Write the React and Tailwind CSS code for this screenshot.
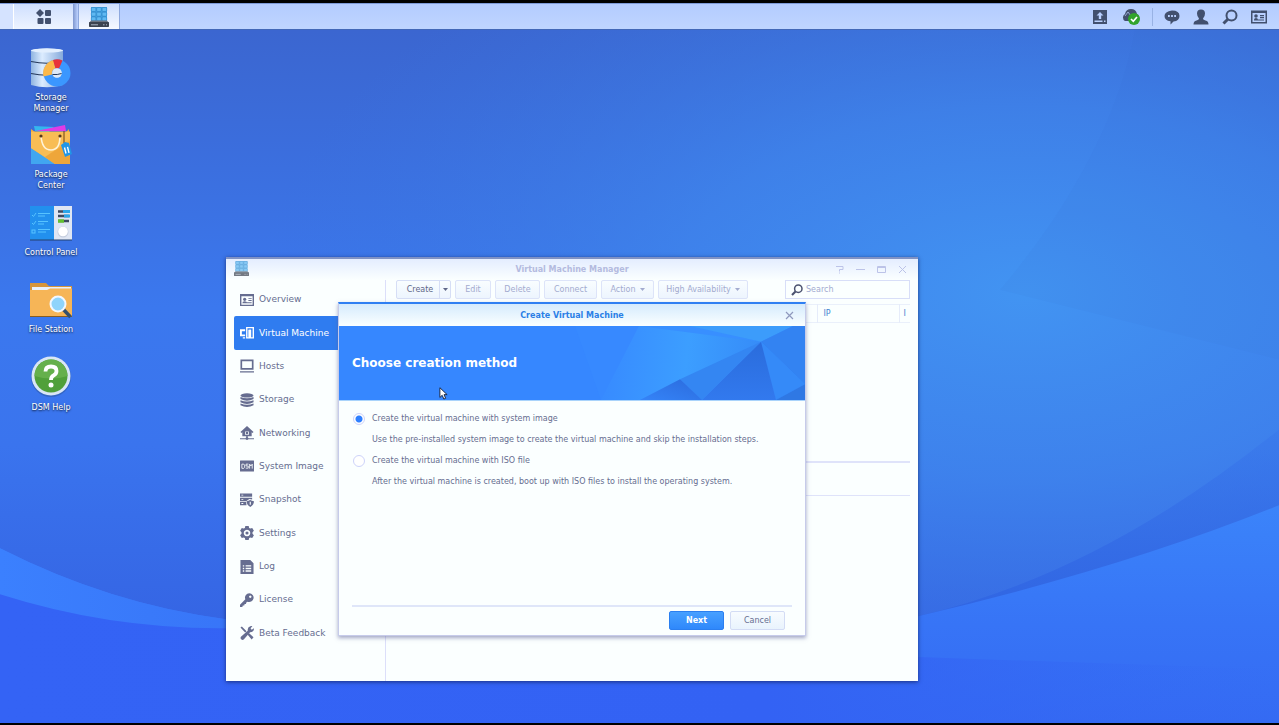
import React, { useState } from 'react'

const ServerIcon = ({ className }) => (
  <svg viewBox="0 0 20 20" className={className}>
    <rect x="2" y="0" width="16" height="15" fill="#3f9fe0" />
    <g fill="#5fb9f2" stroke="#2f86c8" strokeWidth="0.6">
      <rect x="2.3" y="0.5" width="4.6" height="4" rx="1" />
      <rect x="7.7" y="0.5" width="4.6" height="4" rx="1" />
      <rect x="13.1" y="0.5" width="4.6" height="4" rx="1" />
      <rect x="2.3" y="5.2" width="4.6" height="4" rx="1" />
      <rect x="7.7" y="5.2" width="4.6" height="4" rx="1" />
      <rect x="13.1" y="5.2" width="4.6" height="4" rx="1" />
      <rect x="2.3" y="9.9" width="4.6" height="4" rx="1" />
      <rect x="7.7" y="9.9" width="4.6" height="4" rx="1" />
      <rect x="13.1" y="9.9" width="4.6" height="4" rx="1" />
    </g>
    <path d="M2 13.5h16l2 2.5H0z" fill="#6d7581" />
    <rect x="0" y="15" width="20" height="5" rx="0.8" fill="#3c434f" />
    <path d="M2 17.8h7M14 17.8h1.5M17 17.8h1" stroke="#aab4c2" strokeWidth="1" />
  </svg>
)

const StorageManagerIcon = () => (
  <svg viewBox="0 0 44 44" className="w-11 h-11">
    <defs>
      <linearGradient id="drum" x1="0" x2="1" y1="0" y2="0">
        <stop offset="0" stopColor="#8fb4e0" />
        <stop offset="0.35" stopColor="#dcecff" />
        <stop offset="1" stopColor="#86aadb" />
      </linearGradient>
    </defs>
    <path d="M2 4.5Q18 0 34 4.5V39q-16 4.500-32 0z" fill="url(#drum)" />
    <ellipse cx="18" cy="4.500" rx="16" ry="2" fill="#e3effe" />
    <path d="M2 15.500q16 3.500 32 0M2 27.500q16 3.500 32 0" stroke="#263a5c" strokeWidth="1.200" fill="none" />
    <circle cx="28" cy="27" r="9" fill="none" stroke="#3b97ff" strokeWidth="9" />
    <path d="M14.500 30.500A13.500 13.500 0 0 1 24.500 14l2 8.500a5 5 0 0 0-3.500 6z" fill="#fbb84a" />
    <path d="M24 14a13.500 13.500 0 0 1 9.500 0.500l-3.500 8a5 5 0 0 0-3.500 0z" fill="#e8323a" />
    <circle cx="28" cy="27" r="4.800" fill="#dbe9fa" />
    <path d="M23.500 28.500q5 0.500 9-1" stroke="#263a5c" strokeWidth="1" fill="none" />
  </svg>
)

const PackageIcon = () => (
  <svg viewBox="0 0 44 44" className="w-11 h-11">
    <path d="M6 8l-1-5 20 1-6 6z" fill="#35b6ee" />
    <path d="M7 8L36 2l1 6z" fill="#e03be6" />
    <path d="M2 6l4 3h31l3-3v35H2z" fill="#f0aa3e" />
    <path d="M2 8.500h39V41H2z" fill="#f5b54a" />
    <path d="M2 25l24 16H2z" fill="#41a6f0" />
    <path d="M2 25l14 9 25-18v-7H2z" fill="#f8bd55" />
    <path d="M41 18v23H26L16 34z" fill="#eea63a" />
    <path d="M12 13q1 14 10 14t9-14" fill="none" stroke="#fff3d6" strokeWidth="1.600" />
    <circle cx="12" cy="13" r="1.600" fill="#57391c" />
    <circle cx="31" cy="13" r="1.600" fill="#57391c" />
    <path d="M35 8v12" stroke="#6b4318" strokeWidth="1" />
    <path d="M32 22l4-3 4 1 3 11-7 3z" fill="#2196e6" />
    <path d="M35.500 24.500l1.500 6M38.500 23.800l1.500 6" stroke="#fff" strokeWidth="1.400" />
  </svg>
)

const ControlPanelIcon = () => (
  <svg viewBox="0 0 44 44" className="w-11 h-11">
    <rect x="1" y="5" width="24" height="34" fill="#2290ee" />
    <rect x="25" y="5" width="18" height="34" fill="#dfe6f3" />
    <path d="M1 39h42" stroke="#22406f" strokeWidth="1.200" />
    <g stroke="#57c3ff" strokeWidth="1" fill="none">
      <path d="M3 14l1.500 1.500L7 12M3 22l1.500 1.500L7 20" />
      <rect x="3" y="29" width="3" height="3" />
      <path d="M9 12.500h12M9 15h7M9 20.500h10M9 23h6M9 28.500h12M9 31h8" />
    </g>
    <path d="M29 10.500h11M29 15h11M29 20h11" stroke="#3d4a60" strokeWidth="2.400" />
    <rect x="34" y="9" width="7" height="3" fill="#2ba6ea" />
    <rect x="35" y="13.500" width="6" height="3" fill="#2ba6ea" />
    <rect x="29" y="18.300" width="6" height="3.400" fill="#62c130" />
    <circle cx="34" cy="31" r="5.500" fill="#c5cede" />
    <circle cx="34" cy="30.500" r="4.800" fill="#fff" />
  </svg>
)

const FileStationIcon = () => (
  <svg viewBox="0 0 44 44" className="w-11 h-11">
    <path d="M1 5h16l3 3h23v30H1z" fill="#d6953a" />
    <path d="M3 9h39v5H3z" fill="#e9f1fb" />
    <path d="M1 12h17l3-1.500h22V38H1z" fill="#f6b557" />
    <path d="M1 38.500h42" stroke="#8a5d20" strokeWidth="1" />
    <path d="M34 31l7.500 8" stroke="#34506e" strokeWidth="3.400" />
    <circle cx="29" cy="26" r="7.500" fill="#8fd4fb" stroke="#f2f8ff" strokeWidth="2" />
  </svg>
)

const HelpIcon = () => (
  <svg viewBox="0 2 44 44" className="w-11 h-11">
    <circle cx="22" cy="23" r="20" fill="#2b4f86" opacity="0.4" />
    <circle cx="22" cy="22" r="19.500" fill="#d9e6f6" />
    <circle cx="22" cy="22" r="16.500" fill="#50a03a" />
    <path d="M5.500 22a16.500 16.500 0 0 1 33 0q-16 5-33 0z" fill="#65b04c" />
    <path d="M16.500 17.500q0-5 5.500-5t5.500 4.500q0 3-3 4.500-2.500 1.300-2.500 4.500" fill="none" stroke="#fff" strokeWidth="3.800" />
    <circle cx="22" cy="31" r="2.500" fill="#fff" />
  </svg>
)

const shortcuts = [
  { label: ['Storage', 'Manager'], icon: <StorageManagerIcon /> },
  { label: ['Package', 'Center'], icon: <PackageIcon /> },
  { label: ['Control Panel'], icon: <ControlPanelIcon /> },
  { label: ['File Station'], icon: <FileStationIcon /> },
  { label: ['DSM Help'], icon: <HelpIcon /> },
]

const menu = [
  {
    name: 'Overview',
    icon: (
      <>
        <path d="M0 1h15v13H0zM1.500 3.500v9h12v-9z" fillRule="evenodd" />
        <circle cx="5" cy="6.800" r="1.700" />
        <path d="M2.500 11q0-2.200 2.500-2.200T7.500 11zM9 5.500h3.500v1H9zM9 7.500h3.500v1H9zM3 10h9.500v1H3z" />
      </>
    ),
  },
  {
    name: 'Virtual Machine',
    icon: (
      <>
        <path d="M6.500 1H15v12.500H6.500zM8 2.500v9.500h1.500V4H12v8h1.500V2.500z" fillRule="evenodd" />
        <path d="M9 4h2.800v8.500H9z" />
        <path d="M5.500 3.500H0v7.500h5.500V9H2V5.500h3.500zM3 12h2.500v1.500H3z" />
      </>
    ),
  },
  {
    name: 'Hosts',
    icon: <path d="M0.500 0.500h14v11h-14zM2.300 2.300v7.400h10.400V2.300zM0 13h15v1.500H0z" fillRule="evenodd" />,
  },
  {
    name: 'Storage',
    icon: (
      <>
        <ellipse cx="7.500" cy="2.600" rx="7" ry="2.300" />
        <path d="M0.500 4.200q7 3 14 0v2.300q-7 3.400-14 0zM0.500 7.700q7 3 14 0V10q-7 3.400-14 0zM0.500 11.200q7 3 14 0v2q-7 3.400-14 0z" />
      </>
    ),
  },
  {
    name: 'Networking',
    icon: (
      <>
        <path d="M7.500 0L14.500 6.500 13.500 7.500 12.500 6.800V11H8.300V13H15v1.300H0V13H6.700V11H2.500V6.800L1.500 7.500 0.500 6.500zM5.500 6v3.500h4V6z" fillRule="evenodd" />
        <circle cx="7.500" cy="7.500" r="1.300" />
        <circle cx="7.500" cy="13.500" r="1.500" />
      </>
    ),
  },
  {
    name: 'System Image',
    icon: (
      <>
        <rect x="0" y="1.500" width="15" height="12" rx="0.500" />
        <path d="M2 5.500h2l1 1v2.500l-1 1H2zM9 5.500H6.500v2h2.300v2.300H6.200M10.300 10.300V5.500l1.400 2 1.400-2v4.800" fill="none" stroke="#fbffff" strokeWidth="0.900" />
      </>
    ),
  },
  {
    name: 'Snapshot',
    icon: (
      <>
        <path d="M0 0.500h13V4H0zM1.500 1.800v1h2v-1zM0 5h13v2L10 6.500 7 8.500H0zM1.500 6.300v1h2v-1zM0 9.500h6.500L7 13H0zM1.500 10.800v1h2v-1z" fillRule="evenodd" />
        <path d="M11 7.500q2 1.300 4 1.200 0 4.300-4 6.300-4-2-4-6.300 2 0.100 4-1.200zM10.400 9.500v3h1.200v-3z" fillRule="evenodd" />
      </>
    ),
  },
  {
    name: 'Settings',
    icon: (
      <>
        <path d="M5.700 0h3.600l0.500 2.100 1.200 0.700 2.100-0.700 1.800 3.100-1.500 1.600v1.400l1.500 1.600-1.800 3.100-2.100-0.700-1.200 0.700L9.300 15H5.700l-0.500-2.100-1.200-0.700-2.100 0.700L0.100 9.800l1.500-1.600V6.800L0.100 5.200 1.900 2.100 4 2.800l1.200-0.700zM7.500 4a3.500 3.500 0 1 0 0.010 0z" fillRule="evenodd" />
        <circle cx="7.500" cy="7.500" r="1.700" />
      </>
    ),
  },
  {
    name: 'Log',
    icon: <path d="M0.500 0h10.500l3.500 3.500V15h-14zM3 5.500V7h1.500V5.500zM6 5.500V7h6V5.500zM3 8.300v1.500h1.500V8.300zM6 8.300v1.500h6V8.300zM3 11v1.500h1.500V11zM6 11v1.500h6V11z" fillRule="evenodd" />,
  },
  {
    name: 'License',
    icon: <path d="M10 0.300a4.700 4.700 0 1 1-2 9L6.500 10.500v1.300H5L4.500 13.500H3L2.500 15H0v-2.500l5.700-5.700A4.700 4.700 0 0 1 10 0.300zM11 2.700a1.300 1.300 0 1 0 0.010 0z" fillRule="evenodd" />,
  },
  {
    name: 'Beta Feedback',
    icon: (
      <>
        <path d="M0.500 1.500L2 0.500 7 5.500 5.500 7zM8 9l1.500-1.500 5 4.500-2 2.500z" />
        <path d="M11 0.300q1.500-0.500 2.300 0L11.300 2.500l1.200 1.500L15 2.300q0.200 4.200-4.200 4.500L4 14.500q-1.500 1-2.700-0.200T1 11.500L8.300 5Q7.800 1.500 11 0.300z" />
      </>
    ),
  },
]

const tools = [
  { name: 'Edit', width: 'w-[36px]' },
  { name: 'Delete', width: 'w-[45px]' },
  { name: 'Connect', width: 'w-[53px]' },
  { name: 'Action', width: 'w-[53px]', arrow: true },
  { name: 'High Availability', width: 'w-[90px]', arrow: true },
]

const Arrow = () => (
  <svg viewBox="0 0 5 3" className="w-[5px] h-[3px] shrink-0" fill="currentColor">
    <path d="M0 0h5L2.500 3z" />
  </svg>
)

const Wallpaper = () => (
  <svg viewBox="0 0 1279 694" preserveAspectRatio="none" className="absolute inset-0 w-full h-full">
    <defs>
      <linearGradient id="sky" x1="0" x2="0" y1="0" y2="1">
        <stop offset="0" stopColor="#3b66d0" />
        <stop offset="0.4" stopColor="#3b78ee" />
        <stop offset="0.6" stopColor="#3a74ee" />
        <stop offset="0.85" stopColor="#3565e4" />
        <stop offset="1" stopColor="#3464ee" />
      </linearGradient>
      <radialGradient id="glow" cx="0.8" cy="0.38" r="0.6">
        <stop offset="0" stopColor="#4294f2" />
        <stop offset="0.45" stopColor="#3f86ec" stopOpacity="0.75" />
        <stop offset="1" stopColor="#3a74e0" stopOpacity="0" />
      </radialGradient>
      <linearGradient id="shade" x1="0" x2="0" y1="0" y2="1">
        <stop offset="0" stopColor="#3570ea" stopOpacity="0.3" />
        <stop offset="1" stopColor="#3064e2" />
      </linearGradient>
      <linearGradient id="floor" gradientUnits="userSpaceOnUse" x1="0" x2="0" y1="476" y2="694">
        <stop offset="0" stopColor="#3b84fa" />
        <stop offset="0.55" stopColor="#3774f6" />
        <stop offset="1" stopColor="#346af3" />
      </linearGradient>
      <linearGradient id="deep" x1="0" x2="1" y1="0" y2="0">
        <stop offset="0" stopColor="#3463f5" />
        <stop offset="0.6" stopColor="#3362f4" />
        <stop offset="1" stopColor="#3468f3" stopOpacity="0" />
      </linearGradient>
      <linearGradient id="crest" x1="0" x2="1" y1="0" y2="0">
        <stop offset="0" stopColor="#3b80fe" />
        <stop offset="1" stopColor="#3772f6" />
      </linearGradient>
    </defs>
    <rect width="1279" height="694" fill="url(#sky)" />
    <rect width="1279" height="694" fill="url(#glow)" />
    <path d="M1135 0Q1110 130 1000 260L1279 330V0z" fill="#3568c8" opacity="0.05" />
    <path d="M1279 400Q1100 545 918 587L918 600 1279 500z" fill="url(#shade)" />
    <path d="M0 519Q110 575 226 590Q560 660 918 587Q1120 540 1279 476V694H0z" fill="url(#floor)" />
    <path d="M0 519Q110 575 226 590L300 600V640H0z" fill="url(#crest)" />
    <path d="M0 565Q110 600 226 599Q650 620 1279 640V694H0z" fill="url(#deep)" />
  </svg>
)

const Banner = () => (
  <svg viewBox="0 0 466 75" preserveAspectRatio="none" className="absolute inset-0 w-full h-full">
    <defs>
      <linearGradient id="wing" gradientUnits="userSpaceOnUse" x1="262" x2="422" y1="0" y2="16">
        <stop offset="0" stopColor="#3789ff" />
        <stop offset="0.55" stopColor="#3c9eff" />
        <stop offset="1" stopColor="#368cf8" />
      </linearGradient>
      <linearGradient id="fold" x1="0" x2="0" y1="0" y2="1">
        <stop offset="0" stopColor="#2a6cdc" />
        <stop offset="1" stopColor="#3279ee" />
      </linearGradient>
      <linearGradient id="corner" x1="1" x2="0" y1="0" y2="1">
        <stop offset="0" stopColor="#2b6bdd" />
        <stop offset="1" stopColor="#3584f8" />
      </linearGradient>
    </defs>
    <rect width="466" height="75" fill="#3687ff" />
    <path d="M236 0H466V75H262z" fill="#3789ff" />
    <path d="M351 0L422 16 301 75H262L300 0z" fill="url(#wing)" />
    <path d="M300 0H351L422 16z" fill="#388fff" />
    <path d="M351 0L422 16 454 0z" fill="#3c9cfb" />
    <path d="M422 16L454 0H466V59z" fill="#3383f2" />
    <path d="M422 16L466 59 437 75z" fill="#358af8" />
    <path d="M422 16L363 75H437z" fill="url(#fold)" />
    <path d="M422 16L341 54 363 75z" fill="#3486f2" />
    <path d="M341 54L301 75H363z" fill="url(#corner)" />
    <path d="M466 59L437 75H466z" fill="#2f78e4" />
  </svg>
)

const CreateDialog = () => {
  const [method, setMethod] = useState('image')
  const radio =
    'w-3 h-3 appearance-none rounded-full border border-[#cdd3fa] bg-white checked:bg-[radial-gradient(circle,#2f80ff_0,#2f80ff_3px,#ffffff_4px)]'

  return (
    <div className="absolute left-[112px] top-[43px] w-[468px] bg-[#fbffff] border-x border-b border-[#c6cbea] border-t-2 border-t-[#2f7ff2] shadow-[0_2px_4px_rgba(90,95,150,0.55)]">
      <div className="relative h-[22px] flex items-center justify-center bg-linear-to-b from-[#d5ebfd] to-[#fbffff]">
        <h2 className="font-bold text-[#2b7fe6]">Create Virtual Machine</h2>
        <button aria-label="Close" className="absolute right-[11px] text-[#8f98bd]">
          <svg viewBox="0 0 9 9" className="w-[9px] h-[9px]" stroke="currentColor" strokeWidth="1.200">
            <path d="M1 1l7 7M8 1L1 8" />
          </svg>
        </button>
      </div>
      <div className="relative h-[75px] flex items-center px-[13px] border-b border-[#a9d3fb]">
        <Banner />
        <h1 className="relative text-[12px] font-bold text-white">Choose creation method</h1>
      </div>
      <form className="h-[204px] px-[14px] pt-[7px] leading-[21px] text-[#666d90]">
        <label className="flex items-center gap-[7px]">
          <input type="radio" name="method" className={radio} checked={method === 'image'} onChange={() => setMethod('image')} />
          Create the virtual machine with system image
        </label>
        <p className="pl-[19px]">Use the pre-installed system image to create the virtual machine and skip the installation steps.</p>
        <label className="flex items-center gap-[7px]">
          <input type="radio" name="method" className={radio} checked={method === 'iso'} onChange={() => setMethod('iso')} />
          Create the virtual machine with ISO file
        </label>
        <p className="pl-[19px]">After the virtual machine is created, boot up with ISO files to install the operating system.</p>
      </form>
      <div className="mx-[13px] h-[30px] pt-1 pr-[7px] flex items-start justify-end gap-[6px] border-t-2 border-[#dfe6f9]">
        <button className="w-[55px] h-[19px] rounded-xs border border-[#2b7ff0] bg-linear-to-b from-[#47a0ff] to-[#2f88fb] font-bold text-white">Next</button>
        <button className="w-[55px] h-[19px] rounded-xs border border-[#d3dcf5] bg-linear-to-b from-[#f8fcff] to-[#e9f3fd] text-[#666d90]">Cancel</button>
      </div>
      <svg viewBox="0 0 12 18" className="absolute left-[100px] top-[83px] w-[9px] h-[13px]">
        <path d="M1 1v13.500l3.200-3 2.300 5.200 2.500-1.100-2.300-5H11z" fill="#fff" stroke="#16223e" strokeWidth="1.300" />
      </svg>
    </div>
  )
}

const VmManager = () => {
  const [active, setActive] = useState('Virtual Machine')

  return (
    <div className="absolute left-[226px] top-[227px] w-[692px] h-[424px] flex flex-col bg-[#fbffff] border-t-2 border-[#8092c4] shadow-[0_1px_4px_rgba(20,35,100,0.8)]">
      <header className="relative h-[21px] flex items-center justify-center bg-linear-to-b from-[#e4edff] to-[#fbffff]">
        <ServerIcon className="absolute left-2 top-[2px] w-[15px] h-[15px] opacity-70" />
        <h1 className="font-bold text-[#b4bbe0]">Virtual Machine Manager</h1>
        <div className="absolute right-[11px] flex gap-3 text-[#bcc3e8]">
          <button aria-label="Help">
            <svg viewBox="0 0 9 9" className="w-[9px] h-[9px]" fill="none" stroke="currentColor">
              <path d="M1 1.500h7v3H4.500v2M4.500 7.500v1" />
            </svg>
          </button>
          <button aria-label="Minimize">
            <svg viewBox="0 0 9 9" className="w-[9px] h-[9px]" fill="none" stroke="currentColor">
              <path d="M0 4.500h9" />
            </svg>
          </button>
          <button aria-label="Maximize">
            <svg viewBox="0 0 9 9" className="w-[9px] h-[9px]" fill="none" stroke="currentColor">
              <path d="M0.500 1.500h8v6h-8zM0.500 2.500h8" />
            </svg>
          </button>
          <button aria-label="Close">
            <svg viewBox="0 0 9 9" className="w-[9px] h-[9px]" fill="none" stroke="currentColor">
              <path d="M1 1l7 7M8 1L1 8" />
            </svg>
          </button>
        </div>
      </header>
      <div className="flex-1 flex">
        <nav className="w-[160px] pl-2 pt-[3px] border-r border-[#dcdffa]">
          <ul className="h-[367px] grid grid-rows-11">
            {menu.map((item) => (
              <li key={item.name}>
                <button
                  onClick={() => setActive(item.name)}
                  className={
                    active === item.name
                      ? 'w-full h-full pl-[6px] flex items-center gap-[5px] rounded-xs bg-[#2f7cf0] text-[9px] text-white'
                      : 'w-full h-full pl-[6px] flex items-center gap-[5px] text-[9px] text-[#666d90]'
                  }
                >
                  <svg viewBox="0 0 15 15" className="w-[14px] h-[14px]" fill="currentColor">{item.icon}</svg>
                  {item.name}
                </button>
              </li>
            ))}
          </ul>
        </nav>
        <main className="flex-1 pl-[10px] pr-2">
          <div className="flex gap-1">
            <div className="flex h-[19px] rounded-xs border border-[#d6def6] bg-linear-to-b from-[#f9fdff] to-[#edf5fe] text-[#5f6788]">
              <button className="w-[42px] pl-1">Create</button>
              <button aria-label="More" className="w-[11px] flex items-center justify-center border-l border-[#d6def6]">
                <Arrow />
              </button>
            </div>
            {tools.map((t) => (
              <button
                key={t.name}
                disabled
                className={`${t.width} h-[19px] flex items-center justify-center gap-1 rounded-xs border border-[#dde4f9] bg-linear-to-b from-[#f9fdff] to-[#edf5fe] text-[#a3abcf] whitespace-nowrap`}
              >
                {t.name}
                {t.arrow && <Arrow />}
              </button>
            ))}
            <label className="ml-auto w-[125px] h-[19px] flex items-center gap-[3px] pl-[5px] border border-[#d8def8]">
              <svg viewBox="0 0 12 12" className="w-3 h-3 shrink-0" fill="none" stroke="#4b5270">
                <circle cx="7.300" cy="4.700" r="3.700" strokeWidth="1.500" />
                <path d="M4.500 7.500L1 11" strokeWidth="2.200" />
              </svg>
              <input placeholder="Search" aria-label="Search" className="w-full min-w-0 outline-none placeholder:text-[#a3abcf]" />
            </label>
          </div>
          <table className="mt-[5px] w-full table-fixed border-y border-[#eaf0fb] text-left text-[#3f86d0]">
            <thead>
              <tr className="h-[18px]">
                <th></th>
                <th className="w-[82px] pl-[6px] border-l border-[#e6ecfa] font-normal">IP</th>
                <th className="w-[11px] pl-1 border-l border-[#e6ecfa] font-normal">I</th>
              </tr>
            </thead>
          </table>
          <div className="mt-[138px] h-[35px] border-t-2 border-b border-[#dfe3fa]"></div>
        </main>
      </div>
      <CreateDialog />
    </div>
  )
}

const Taskbar = () => (
  <div className="relative h-[27px] flex items-center border-t border-b border-t-[#7d9ad8] border-b-[#4268b8] bg-linear-to-b from-[#b4ccff] to-[#bfd5ff] text-[#42506e]">
    <div className="w-[13px] h-full bg-[#d5e3ff]"></div>
    <button aria-label="Main menu" className="w-[60px] h-full flex items-center justify-center border-l border-white bg-linear-to-b from-[#cfdffe] to-[#eef4ff]">
      <svg viewBox="0 0 16 16" className="w-4 h-4" fill="currentColor">
        <path d="M4 0l4 4-4 4-4-4z" />
        <rect x="9" y="1" width="6" height="6" rx="1" />
        <rect x="1.500" y="9" width="6" height="6" rx="1" />
        <rect x="9" y="9" width="6" height="6" rx="1" />
      </svg>
    </button>
    <div className="w-[5px] h-full bg-linear-to-r from-[#7f97cf] to-[#bdd2ff]"></div>
    <button aria-label="Virtual Machine Manager" className="w-[42px] h-full flex items-center justify-center border-x border-[#8ea8de] bg-linear-to-b from-[#cfdffe] to-[#f6f9ff]">
      <ServerIcon className="w-5 h-5" />
    </button>
    <div className="ml-auto mr-3 flex items-center gap-[13px]">
      <button aria-label="External devices">
        <svg viewBox="0 0 16 16" className="w-4 h-4" fill="currentColor">
          <path d="M1 1h14v14H1zM8 3L4.500 6.500h2.300V10h2.400V6.500h2.300zM2.500 11.500v1.500h8v-1.500zM12 11.500v1.500h1.500v-1.500z" fillRule="evenodd" />
        </svg>
      </button>
      <button aria-label="Sync status">
        <svg viewBox="0 0 20 17" className="w-5 h-[17px]">
          <path d="M4 13a4 4 0 0 1 0-7q1-5 6-5t6 5q3 2 2 5t-4 2z" fill="currentColor" />
          <path d="M4 8l3-4 3 4" fill="none" stroke="#a9bfe8" strokeWidth="0.800" />
          <circle cx="13" cy="11" r="6" fill="#31a32c" />
          <path d="M10 11l2.300 2.300L16 9" fill="none" stroke="#fff" strokeWidth="1.700" />
        </svg>
      </button>
      <span className="-mx-[2px] w-px h-[18px] bg-[#98b2e4]"></span>
      <button aria-label="Notifications">
        <svg viewBox="0 0 16 16" className="w-4 h-4" fill="currentColor">
          <path d="M8 1.500q7.500 0 7.500 5.500 0 5-6 5.400L6.500 15.500V12.300Q0.500 11.500 0.500 7T8 1.500zM4 6v2h1.800V6zM7.100 6v2h1.800V6zM10.200 6v2H12V6z" fillRule="evenodd" />
        </svg>
      </button>
      <button aria-label="User">
        <svg viewBox="0 0 16 16" className="w-4 h-4" fill="currentColor">
          <path d="M8 0.500q4 0 4 4 0 3-2 5 0 1.500 2.500 2Q15.500 12 15.500 15.500H0.500Q0.500 12 3.500 11.500 6 11 6 9.500 4 7.500 4 4.500q0-4 4-4z" />
        </svg>
      </button>
      <button aria-label="Search">
        <svg viewBox="0 0 16 16" className="w-4 h-4" fill="none" stroke="currentColor">
          <circle cx="9.500" cy="6.500" r="5" strokeWidth="2" />
          <path d="M5.800 10.200L1.500 14.500" strokeWidth="3" />
        </svg>
      </button>
      <button aria-label="Widgets">
        <svg viewBox="0 0 16 16" className="w-4 h-4" fill="currentColor">
          <path d="M0 1.500h16v13H0zM1.500 4v9h13V4z" fillRule="evenodd" />
          <circle cx="5" cy="7" r="1.800" />
          <path d="M3 11q0-2 2-2t2 2zM9 6h4v1.200H9zM9 8h4v1.200H9zM3 10.500h10v1H3z" />
        </svg>
      </button>
    </div>
  </div>
)

const App = () => {
  return (
    <div className="min-h-screen flex flex-col bg-black pt-[3px] pb-[2px] font-['DejaVu_Sans','Verdana',sans-serif] text-[8px] leading-[11px]">
      <Taskbar />
      <div className="relative flex-1 overflow-hidden">
        <Wallpaper />
        <div className="relative w-[102px] h-[403px] pt-4 grid grid-rows-5">
          {shortcuts.map((s) => (
            <a key={s.label[0]} href="#" className="flex flex-col items-center gap-[2px] text-center text-white [text-shadow:0_1px_2px_rgba(0,0,0,0.8)]">
              {s.icon}
              <span>
                {s.label.map((line) => (
                  <span key={line} className="block">{line}</span>
                ))}
              </span>
            </a>
          ))}
        </div>
        <VmManager />
      </div>
    </div>
  )
}

export default App
